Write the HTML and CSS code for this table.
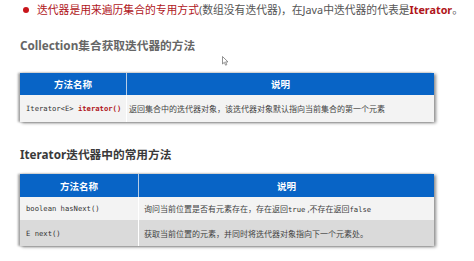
FILE: index.html
```html
<!DOCTYPE html>
<html lang="zh">
<head>
  <meta charset="UTF-8">
  <title>Iterator 迭代器</title>
  <link rel="stylesheet" href="styles.css">
</head>
<body>
  <div class="page">
    <p class="point">
      <span class="dot"></span>
      <span class="red">迭代器是用来遍历集合的专用方式</span>(数组没有迭代器)，在Java中迭代器的代表是<b class="red">Iterator</b>。
    </p>

    <h2 class="title">Collection集合获取迭代器的方法</h2>
    <table class="api first">
      <tr>
        <th class="name">方法名称</th>
        <th>说明</th>
      </tr>
      <tr class="light">
        <td class="code">Iterator&lt;E&gt; <b class="red">iterator()</b></td>
        <td>返回集合中的迭代器对象，该迭代器对象默认指向当前集合的第一个元素</td>
      </tr>
    </table>

    <h2 class="title dark">Iterator迭代器中的常用方法</h2>
    <table class="api second">
      <tr>
        <th class="name">方法名称</th>
        <th>说明</th>
      </tr>
      <tr class="light">
        <td class="code">boolean hasNext()</td>
        <td>询问当前位置是否有元素存在，存在返回<span class="code">true</span> ,不存在返回<span class="code">false</span></td>
      </tr>
      <tr class="grey">
        <td class="code">E next()</td>
        <td>获取当前位置的元素，并同时将迭代器对象指向下一个元素处。</td>
      </tr>
    </table>

    <!-- 鼠标指针 -->
    <svg class="cursor" width="7" height="10" viewBox="0 0 7 10">
      <path d="M0.5 0.5 L0.5 8 L2.3 6.3 L3.6 9.2 L4.8 8.7 L3.6 5.9 L6 5.9 Z" fill="#fff" stroke="#777" stroke-width="0.8"/>
    </svg>
  </div>
</body>
</html>
```

FILE: styles.css
```css
html, body {
  margin: 0;
  padding: 0;
  background: #fff;
  font-family: 'Noto Sans', 'Noto Sans CJK SC', sans-serif;
  color: #555;
}

.page {
  position: relative;
  width: 474px;
  height: 261px;
  overflow: hidden;
  padding: 0 0 0 20px;
  box-sizing: border-box;
}

.red {
  color: #b0161b;
}

.point {
  margin: 0;
  padding: 2px 0 0 3px;
  font-size: 10.8px;
  line-height: 16px;
  display: flex;
  align-items: center;
  white-space: nowrap;
}

.point .dot {
  width: 6px;
  height: 6px;
  border-radius: 50%;
  background: #c8151b;
  margin-right: 8px;
}

.point b {
  font-weight: 700;
}

.title {
  margin: 0;
  font-size: 11.7px;
  font-weight: 700;
  color: #666;
  line-height: 16px;
  padding: 19px 0 20px;
}

.title.dark {
  color: #3a3a3a;
  padding: 24px 0 12px;
}

.api {
  width: 414px;
  border-collapse: collapse;
  box-shadow: -2px 0 2px rgba(0, 0, 0, 0.35), 2px 1px 3px rgba(0, 0, 0, 0.45);
  font-size: 8px;
  color: #444;
}

.api th {
  background: #0864c6;
  color: #fff;
  font-size: 9.5px;
  font-weight: 700;
  padding: 0;
  text-align: center;
}

.api th + th {
  border-left: 1px solid #b7cde6;
}

.api td + td {
  border-left: 1px solid #fff;
}

.api td {
  padding: 0 0 0 6px;
  text-align: left;
  white-space: nowrap;
}

.first th {
  height: 22px;
}

.first td + td {
  padding-left: 2px;
}

.first .name {
  width: 106px;
}

.first tr.light td {
  height: 27px;
}

.second th {
  height: 23px;
}

.second td + td {
  padding-left: 5px;
}

.second .name {
  width: 118px;
}

.second tr.light td {
  height: 23px;
}

.second tr.grey td {
  height: 26px;
}

.light td {
  background: #f3f3f3;
}

.grey td {
  background: #dadada;
}

.code {
  font-family: 'DejaVu Sans Mono', 'Liberation Mono', monospace;
  font-size: 7.2px;
  color: #333;
}

.code b {
  font-weight: 700;
}

.cursor {
  position: absolute;
  left: 222px;
  top: 56px;
}
```
